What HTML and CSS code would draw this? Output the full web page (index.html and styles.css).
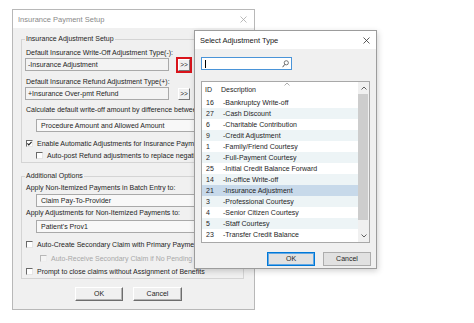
FILE: index.html
```html
<!DOCTYPE html>
<html lang="en">
<head>
  <meta charset="UTF-8" />
  <title>Insurance Payment Setup</title>
  <link rel="stylesheet" href="styles.css">
</head>
<body>
  <div class="desk">

    <div class="win main">
      <div class="titlebar">
        <span class="title">Insurance Payment Setup</span>
        <svg class="close" width="7" height="7" viewBox="0 0 7 7"><path d="M0.5 0.5 L6.5 6.5 M6.5 0.5 L0.5 6.5" stroke="#a8a8a8" stroke-width="0.8"/></svg>
      </div>
      <div class="content">
        <fieldset class="group g1">
          <legend>Insurance Adjustment Setup</legend>
          <div class="lbl">Default Insurance Write-Off Adjustment Type(-):</div>
          <div class="pick">
            <div class="tb">-Insurance Adjustment</div>
            <div class="dots hl">&gt;&gt;</div>
          </div>
          <div class="lbl gap6">Default Insurance Refund Adjustment Type(+):</div>
          <div class="pick">
            <div class="tb">+Insurance Over-pmt Refund</div>
            <div class="dots">&gt;&gt;</div>
          </div>
          <div class="lbl gap5">Calculate default write-off amount by difference between Procedure and Allowed</div>
          <div class="box-field gap5">Procedure Amount and Allowed Amount</div>
          <div class="chk gap6">
            <span class="cb"><svg width="5" height="5" viewBox="0 0 5 5"><path d="M0.4 2.4 L1.8 3.9 L4.6 0.8" fill="none" stroke="#222" stroke-width="1.1"/></svg></span>
            Enable Automatic Adjustments for Insurance Payments
          </div>
          <div class="chk sub gap2">
            <span class="cb"></span>
            Auto-post Refund adjustments to replace negative write-offs
          </div>
        </fieldset>

        <fieldset class="group g2">
          <legend>Additional Options</legend>
          <div class="lbl">Apply Non-Itemized Payments in Batch Entry to:</div>
          <div class="box-field gap2">Claim Pay-To-Provider</div>
          <div class="lbl gap1">Apply Adjustments for Non-Itemized Payments to:</div>
          <div class="box-field gap3">Patient's Prov1</div>
          <div class="chk gap6">
            <span class="cb"></span>
            Auto-Create Secondary Claim with Primary Payment
          </div>
          <div class="chk sub2 off gap4">
            <span class="cb"></span>
            Auto-Receive Secondary Claim if No Pending Insurance
          </div>
          <div class="chk gap3">
            <span class="cb"></span>
            Prompt to close claims without Assignment of Benefits
          </div>
        </fieldset>

        <div class="actions">
          <div class="btn3d ok">OK</div>
          <div class="btn3d cancel">Cancel</div>
        </div>
      </div>
    </div>

    <div class="win picker">
      <div class="titlebar">
        <span class="title">Select Adjustment Type</span>
        <svg class="close" width="7" height="7" viewBox="0 0 7 7"><path d="M0.5 0.5 L6.5 6.5 M6.5 0.5 L0.5 6.5" stroke="#333" stroke-width="0.8"/></svg>
      </div>
      <div class="content">
        <div class="search">
          <span class="caret"></span>
          <svg width="7" height="8" viewBox="0 0 7 8"><circle cx="4.3" cy="2.8" r="2.1" fill="none" stroke="#555" stroke-width="0.8"/><path d="M2.8 4.4 L0.6 7.2" stroke="#555" stroke-width="1"/></svg>
        </div>
        <div class="list">
          <div class="rows">
            <div class="head">
              <span class="id">ID</span>
              <span class="desc">Description</span>
              <svg class="sort" width="6" height="4" viewBox="0 0 6 4"><path d="M0.5 3.5 L3 1 L5.5 3.5" fill="none" stroke="#999" stroke-width="0.8"/></svg>
            </div>
            <div class="row"><span class="id">16</span><span class="desc">-Bankruptcy Write-off</span></div>
            <div class="row"><span class="id">27</span><span class="desc">-Cash Discount</span></div>
            <div class="row"><span class="id">6</span><span class="desc">-Charitable Contribution</span></div>
            <div class="row"><span class="id">9</span><span class="desc">-Credit Adjustment</span></div>
            <div class="row"><span class="id">1</span><span class="desc">-Family/Friend Courtesy</span></div>
            <div class="row"><span class="id">2</span><span class="desc">-Full-Payment Courtesy</span></div>
            <div class="row"><span class="id">25</span><span class="desc">-Initial Credit Balance Forward</span></div>
            <div class="row"><span class="id">14</span><span class="desc">-In-office Write-off</span></div>
            <div class="row selected"><span class="id">21</span><span class="desc">-Insurance Adjustment</span></div>
            <div class="row"><span class="id">3</span><span class="desc">-Professional Courtesy</span></div>
            <div class="row"><span class="id">4</span><span class="desc">-Senior Citizen Courtesy</span></div>
            <div class="row"><span class="id">5</span><span class="desc">-Staff Courtesy</span></div>
            <div class="row"><span class="id">23</span><span class="desc">-Transfer Credit Balance</span></div>
          </div>
          <div class="scroll">
            <div class="arrow"><svg width="6" height="4" viewBox="0 0 6 4"><path d="M0.5 3.5 L3 1 L5.5 3.5" fill="none" stroke="#606060" stroke-width="1"/></svg></div>
            <div class="thumb"></div>
            <div class="track"></div>
            <div class="arrow"><svg width="6" height="4" viewBox="0 0 6 4"><path d="M0.5 0.5 L3 3 L5.5 0.5" fill="none" stroke="#606060" stroke-width="1"/></svg></div>
          </div>
        </div>
        <div class="actions">
          <div class="btn ok">OK</div>
          <div class="btn">Cancel</div>
        </div>
      </div>
    </div>

  </div>
</body>
</html>
```

FILE: styles.css
```css
body {
  margin: 0;
  background-color: #ffffff;
  font-family: "Liberation Sans", Arial, sans-serif;
  font-size: 7px;
  color: #1e1e1e;
}

.desk {
  position: relative;
  width: 474px;
  height: 323px;
  overflow: hidden;
}

/* windows */
.win {
  position: absolute;
  box-sizing: border-box;
  display: flex;
  flex-direction: column;
  background-color: #f0f0f0;
  border: 1px solid #b8b8b8;
  overflow: hidden;
}

.main {
  left: 12px;
  top: 9px;
  width: 243px;
  height: 301px;
}

.picker {
  left: 194px;
  top: 30px;
  width: 183px;
  height: 239px;
  border-color: #9c9c9c;
  box-shadow: 1px 2px 6px rgba(0, 0, 0, 0.18);
}

.titlebar {
  flex: none;
  height: 18px;
  display: flex;
  align-items: center;
  justify-content: space-between;
  background-color: #ffffff;
  padding: 0 7px 0 5px;
  font-size: 7.5px;
}

.main .title {
  color: #8a8a8a;
}

.picker .titlebar {
  padding-right: 6px;
}

.picker .title {
  color: #202020;
}

/* main dialog */
.main .content {
  padding: 0 10px 0 8px;
}

.group {
  margin: 6px 0 0;
  padding: 4px 3px 2px 4px;
  border: 1px solid #d4d4d4;
  min-width: 0;
}

.group legend {
  padding: 0 1px;
  margin-left: -1px;
  line-height: 10px;
}

.g2 {
  margin-top: 8px;
  padding-top: 2px;
}

.lbl {
  height: 9px;
  line-height: 9px;
  white-space: nowrap;
}

.gap1 { margin-top: 1px; }
.gap2 { margin-top: 2px; }
.gap3 { margin-top: 3px; }
.gap4 { margin-top: 4px; }
.gap5 { margin-top: 5px; }
.gap6 { margin-top: 6px; }

.pick {
  display: flex;
  align-items: center;
  gap: 6px;
  height: 13px;
  margin-top: 1px;
}

.tb {
  box-sizing: border-box;
  width: 144px;
  height: 13px;
  margin-left: -1px;
  padding-left: 2px;
  line-height: 11px;
  border: 1px solid #a9a9a9;
  background-color: #f3f3f3;
  white-space: nowrap;
}

.dots {
  box-sizing: border-box;
  width: 12px;
  height: 12px;
  margin-left: 3px;
  font-size: 6.5px;
  line-height: 10px;
  text-align: center;
  border: 1px solid;
  border-color: #ffffff #7a7a7a #7a7a7a #ffffff;
  background-color: #f0f0f0;
}

.hl {
  outline: 2px solid #d9141b;
  outline-offset: 0;
}

.box-field {
  box-sizing: border-box;
  width: 200px;
  height: 13px;
  margin-left: 10px;
  padding-left: 4px;
  line-height: 11px;
  border: 1px solid #a9a9a9;
  background-color: #f8f8f8;
  white-space: nowrap;
}

.chk {
  display: flex;
  align-items: center;
  gap: 4px;
  height: 10px;
  white-space: nowrap;
}

.chk.sub {
  margin-left: 10px;
}

.chk.sub2 {
  margin-left: 14px;
}

.chk.off {
  color: #a8a8a8;
}

.cb {
  box-sizing: border-box;
  flex: none;
  width: 7px;
  height: 7px;
  display: flex;
  align-items: center;
  justify-content: center;
  border: 1px solid;
  border-color: #6a6a6a #e6e6e6 #e6e6e6 #6a6a6a;
  background-color: #ffffff;
}

.off .cb {
  border-color: #b8b8b8 #eeeeee #eeeeee #b8b8b8;
  background-color: #f4f4f4;
}

.main .actions {
  display: flex;
  gap: 10px;
  margin-top: 8px;
  padding-left: 54px;
}

.btn3d {
  box-sizing: border-box;
  width: 48px;
  height: 14px;
  line-height: 12px;
  text-align: center;
  border: 1px solid;
  border-color: #ffffff #6d6d6d #6d6d6d #ffffff;
  box-shadow: inset -1px -1px 0 #b4b4b4;
  background-color: #f0f0f0;
}

.btn3d.cancel {
  width: 49px;
}

/* select adjustment type */
.picker .content {
  padding: 8px 6px 0;
}

.search {
  box-sizing: border-box;
  width: 91px;
  height: 13px;
  display: flex;
  align-items: center;
  justify-content: space-between;
  padding: 0 2px 0 3px;
  border: 1px solid #4a94d8;
  background-color: #ffffff;
}

.caret {
  width: 1px;
  height: 8px;
  background-color: #000000;
}

.list {
  box-sizing: border-box;
  height: 162px;
  margin-top: 11px;
  display: flex;
  border: 1px solid #a8a8a8;
  background-color: #ffffff;
}

.rows {
  flex: 1;
  min-width: 0;
}

.head,
.row {
  display: flex;
  align-items: center;
  white-space: nowrap;
}

.head {
  position: relative;
  height: 15px;
}

.row {
  height: 11px;
}

.row:nth-child(odd) {
  background-color: #edf4f6;
}

.row.selected {
  background-color: #c7d9ea;
}

.id {
  box-sizing: border-box;
  width: 19px;
  padding-left: 4px;
}

.head .id {
  padding-left: 3px;
}

.desc {
  padding-left: 2px;
}

.head .desc {
  padding-left: 0;
}

.sort {
  position: absolute;
  left: 82px;
  top: 0;
}

.scroll {
  width: 11px;
  display: flex;
  flex-direction: column;
  background-color: #f0f0f0;
}

.arrow {
  height: 12px;
  display: flex;
  align-items: center;
  justify-content: center;
}

.thumb {
  height: 126px;
  margin: 0 1px 0 0;
  background-color: #cdcdcd;
}

.track {
  flex: 1;
}

.picker .actions {
  display: flex;
  justify-content: flex-end;
  gap: 8px;
  margin-top: 9px;
  margin-right: -1px;
}

.btn {
  box-sizing: border-box;
  width: 48px;
  height: 14px;
  line-height: 12px;
  text-align: center;
  border: 1px solid #adadad;
  background-color: #e1e1e1;
}

.btn.ok {
  border: 1px solid #0078d7;
  box-shadow: inset 0 0 0 1px #62a8e4;
  line-height: 12px;
}
```
